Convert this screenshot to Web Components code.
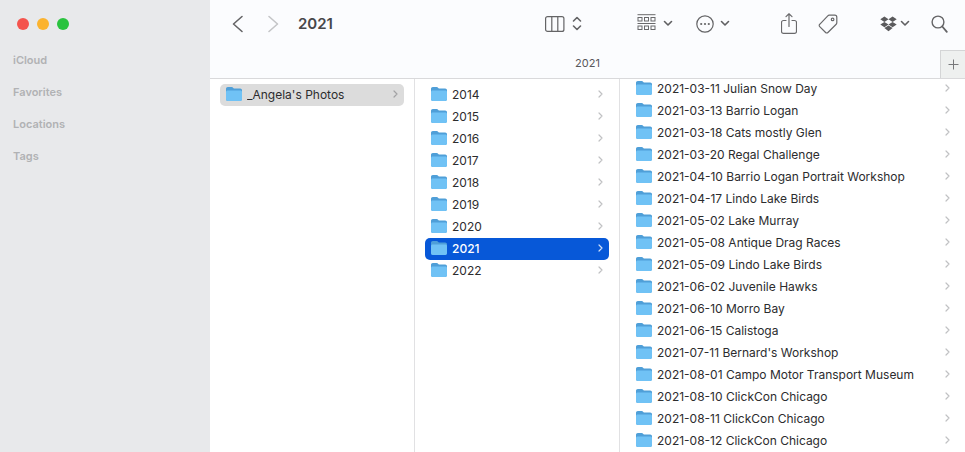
<!DOCTYPE html>
<html lang="en">
<head>
<meta charset="utf-8">
<title>2021</title>
<style>
  html, body { margin: 0; height: 100%; overflow: hidden; background: #fff; }
  body { font-family: Inter, "Liberation Sans", sans-serif; }
</style>
</head>
<body>
<finder-window>
  <finder-sidebar slot="sidebar">
    <side-label>iCloud</side-label>
    <side-label>Favorites</side-label>
    <side-label>Locations</side-label>
    <side-label>Tags</side-label>
  </finder-sidebar>
  <finder-toolbar slot="toolbar" folder="2021"></finder-toolbar>
  <finder-tabbar slot="toolbar">2021</finder-tabbar>
  <finder-column slot="columns" id="c1" style="width:205px"></finder-column>
  <finder-column slot="columns" id="c2" style="width:205px"></finder-column>
  <finder-column slot="columns" id="c3" scrolled style="flex:1"></finder-column>
</finder-window>

<script>
class FinderWindow extends HTMLElement {
  constructor() {
    super();
    this.attachShadow({ mode: "open" });
    this.shadowRoot.innerHTML = `
      <style>
        :host { display: flex; width: 965px; height: 452px; overflow: hidden; }
        .main { flex: 1; display: flex; flex-direction: column; min-width: 0; }
        .cols { flex: 1; display: flex; min-height: 0; }
      </style>
      <slot name="sidebar"></slot>
      <div class="main">
        <slot name="toolbar"></slot>
        <div class="cols"><slot name="columns"></slot></div>
      </div>`;
  }
}

class FinderSidebar extends HTMLElement {
  constructor() {
    super();
    this.attachShadow({ mode: "open" });
    this.shadowRoot.innerHTML = `
      <style>
        :host { display: block; width: 210px; flex: none; background: #e8e9eb; box-sizing: border-box; padding: 18px 0 0 17px; }
        .lights { display: flex; gap: 8px; height: 34px; }
        .lights i { width: 12px; height: 12px; border-radius: 50%; }
        .wrap { margin-left: -4px; }
      </style>
      <div class="lights">
        <i style="background:#f4544d"></i>
        <i style="background:#fbb32f"></i>
        <i style="background:#2ac33f"></i>
      </div>
      <div class="wrap"><slot></slot></div>`;
  }
}

class SideLabel extends HTMLElement {
  constructor() {
    super();
    this.attachShadow({ mode: "open" });
    this.shadowRoot.innerHTML = `
      <style>
        :host { display: block; height: 32px; line-height: 16px; font-size: 11px; font-weight: 600; color: #b1b2b4; }
      </style>
      <slot></slot>`;
  }
}

const chevronDown = `<svg width="10" height="7" viewBox="0 0 10 7" fill="none" stroke="#5f5f61" stroke-width="1.6" stroke-linecap="round" stroke-linejoin="round"><path d="M1.5 1.5 5 5l3.5-3.5"/></svg>`;

class FinderToolbar extends HTMLElement {
  constructor() {
    super();
    this.attachShadow({ mode: "open" });
    this.shadowRoot.innerHTML = `
      <style>
        :host { display: flex; align-items: center; height: 50px; box-sizing: border-box; padding: 0 0 3px 21px; background: #fbfcfe; color: #5f5f61; }
        svg { display: block; flex: none; }
        .title { font-size: 15px; font-weight: 600; color: #47474a; width: 247px; margin-left: 18px; }
      </style>
      <svg width="14" height="18" viewBox="0 0 14 18" fill="none" stroke="#646466" stroke-width="1.6" stroke-linecap="round" stroke-linejoin="round"><path d="M11 1.5 2.5 9l8.5 7.5"/></svg>
      <svg style="margin-left:21px" width="14" height="18" viewBox="0 0 14 18" fill="none" stroke="#c4c5c7" stroke-width="1.6" stroke-linecap="round" stroke-linejoin="round"><path d="M3 1.5 11.5 9 3 16.5"/></svg>
      <div class="title">${this.getAttribute("folder")}</div>

      <svg width="20" height="16" viewBox="0 0 20 16" fill="none" stroke="#646466" stroke-width="1.2"><rect x=".6" y=".6" width="18.3" height="14.8" rx="2"/><path d="M6.8.6v14.8M12.8.6v14.8"/></svg>
      <svg style="margin-left:7px" width="10" height="15" viewBox="0 0 10 15" fill="none" stroke="#646466" stroke-width="1.6" stroke-linecap="round" stroke-linejoin="round"><path d="M1.5 5 5 1.5 8.5 5M1.5 10 5 13.5 8.5 10"/></svg>

      <svg style="margin-left:55px" width="19" height="19" viewBox="0 0 19 19" fill="none" stroke="#69696b" stroke-width="1"><path d="M.5.7h18M.5 9.5h18"/><rect x="1" y="3.5" width="4" height="3.5"/><rect x="7.5" y="3.5" width="4" height="3.5"/><rect x="14" y="3.5" width="4" height="3.5"/><rect x="1" y="12" width="4" height="3.5"/><rect x="7.5" y="12" width="4" height="3.5"/><rect x="14" y="12" width="4" height="3.5"/></svg>
      <span style="margin-left:7px">${chevronDown}</span>

      <svg style="margin-left:23px" width="18" height="18" viewBox="0 0 18 18"><circle cx="9" cy="9" r="8.2" fill="none" stroke="#646466" stroke-width="1.2"/><circle cx="5.2" cy="9" r="1.1" fill="#646466"/><circle cx="9" cy="9" r="1.1" fill="#646466"/><circle cx="12.8" cy="9" r="1.1" fill="#646466"/></svg>
      <span style="margin-left:6px">${chevronDown}</span>

      <svg style="margin-left:51px" width="16" height="21" viewBox="0 0 16 21" fill="none" stroke="#69696b" stroke-width="1.2" stroke-linecap="round" stroke-linejoin="round"><path d="M5 7.500H2.500a2 2 0 0 0-2 2v8.900a2 2 0 0 0 2 2h11a2 2 0 0 0 2-2V9.500a2 2 0 0 0-2-2H11"/><path d="M8 13.500V1M5 3.600 8 .8l3 2.800"/></svg>

      <svg style="margin-left:21px" width="20" height="20" viewBox="0 0 20 20" fill="none" stroke="#69696b" stroke-width="1.2" stroke-linejoin="round"><path d="M11.200 1.200h5.600a2 2 0 0 1 2 2v5.600a2 2 0 0 1-.6 1.400l-8.300 8.300a1.600 1.600 0 0 1-2.300 0l-5.900-5.900a1.600 1.600 0 0 1 0-2.300l8.100-8.500a2 2 0 0 1 1.400-.6z"/><circle cx="14.600" cy="5.400" r="1.300"/></svg>

      <svg style="margin-left:42px" width="17" height="16" viewBox="0 0 17 16" fill="#5a5a5c"><path d="M4.400.6.300 3.300l4.100 2.600 4.100-2.600zM12.600.6 8.500 3.300l4.100 2.600 4.100-2.600zM.3 8.500l4.100 2.700 4.100-2.700-4.100-2.600zM12.600 5.900 8.500 8.500l4.100 2.700 4.100-2.700zM4.400 12l4.100 3.200 4.100-3.200-4.100-2.600z"/></svg>
      <span style="margin-left:3px">${chevronDown}</span>

      <svg style="margin-left:21px" width="17" height="18" viewBox="0 0 17 18" fill="none" stroke="#646466" stroke-width="1.4" stroke-linecap="round"><circle cx="7" cy="7" r="5.900"/><path d="M11.300 11.500 15.800 16.800" stroke-width="1.800"/></svg>`;
  }
}

class FinderTabbar extends HTMLElement {
  constructor() {
    super();
    this.attachShadow({ mode: "open" });
    this.shadowRoot.innerHTML = `
      <style>
        :host { display: flex; height: 29px; box-sizing: border-box; background: #fbfcfe; border-bottom: 1px solid #d9d9db; font-size: 11px; color: #57575a; }
        .title { flex: 1; display: flex; align-items: center; justify-content: center; padding: 0 0 2px 25px; }
        .plus { width: 25px; box-sizing: border-box; border-left: 1px solid #d4d5d6; border-top: 1px solid #d4d5d6; background: #eef0ef; display: flex; align-items: center; justify-content: center; }
        svg { display: block; }
      </style>
      <div class="title"><slot></slot></div>
      <div class="plus"><svg width="11" height="11" viewBox="0 0 11 11" stroke="#77787a" stroke-width="1"><path d="M5.500.5v10M.5 5.500h10"/></svg></div>`;
  }
}

class FinderColumn extends HTMLElement {
  constructor() {
    super();
    this.attachShadow({ mode: "open" });
    this.shadowRoot.innerHTML = `
      <style>
        :host { display: block; box-sizing: border-box; overflow: hidden; border-right: 1px solid #e1e1e3; background: #fff; }
        :host(:last-of-type) { border-right: 0; }
        .list { padding: 5px 10px 0; display: flex; flex-direction: column; }
        :host([scrolled]) .list { padding: 0 9px 0 10px; margin-top: -1px; }
      </style>
      <div class="list"><slot></slot></div>`;
  }
}

class FolderRow extends HTMLElement {
  constructor() {
    super();
    this.attachShadow({ mode: "open" });
    this.shadowRoot.innerHTML = `
      <style>
        :host { display: flex; align-items: center; height: 22px; box-sizing: border-box; padding: 0 6px 2px; border-radius: 5px; font-size: 12px; color: #2c2c2e; flex: none; }
        :host([state="open"]) { background: #dcdcdc; }
        :host([state="active"]) { background: #0758d8; color: #fff; font-weight: 500; }
        .name { flex: 1; margin-left: 5px; white-space: nowrap; overflow: hidden; }
        svg { display: block; flex: none; }
        .chev { stroke: #c0c1c3; }
        :host([state="open"]) .chev { stroke: #a2a2a4; }
        :host([state="active"]) .chev { stroke: #cfe0fa; }
      </style>
      <svg width="16" height="14" viewBox="0 0 16 14">
        <path d="M1.800 0h3.800c.8 0 1.200.3 1.700.9l.6.7h6.300c1 0 1.800.8 1.800 1.800V12c0 1.100-.8 2-1.800 2H1.800C.8 14 0 13.100 0 12V1.800C0 .8.8 0 1.800 0z" fill="#4f9fd8"/>
        <path d="M1.600 3.500h12.800c.9 0 1.600.7 1.600 1.600V12c0 1.100-.8 2-1.800 2H1.800C.8 14 0 13.100 0 12V5.100c0-.9.7-1.600 1.600-1.600z" fill="#70c2f5"/>
      </svg>
      <span class="name"><slot></slot></span>
      <svg width="5" height="8" viewBox="0 0 5 8" fill="none" class="chev" stroke-width="1.200" stroke-linecap="round" stroke-linejoin="round"><path d="M1 1l3 3-3 3"/></svg>`;
  }
}

customElements.define("finder-window", FinderWindow);
customElements.define("finder-sidebar", FinderSidebar);
customElements.define("side-label", SideLabel);
customElements.define("finder-toolbar", FinderToolbar);
customElements.define("finder-tabbar", FinderTabbar);
customElements.define("finder-column", FinderColumn);
customElements.define("folder-row", FolderRow);

function fill(id, names, states) {
  const col = document.getElementById(id);
  names.forEach((name) => {
    const row = document.createElement("folder-row");
    row.textContent = name;
    if (states[name]) row.setAttribute("state", states[name]);
    col.appendChild(row);
  });
}

fill("c1", ["_Angela's Photos"], { "_Angela's Photos": "open" });
fill("c2", ["2014", "2015", "2016", "2017", "2018", "2019", "2020", "2021", "2022"], { "2021": "active" });
fill("c3", [
  "2021-03-11 Julian Snow Day",
  "2021-03-13 Barrio Logan",
  "2021-03-18 Cats mostly Glen",
  "2021-03-20 Regal Challenge",
  "2021-04-10 Barrio Logan Portrait Workshop",
  "2021-04-17 Lindo Lake Birds",
  "2021-05-02 Lake Murray",
  "2021-05-08 Antique Drag Races",
  "2021-05-09 Lindo Lake Birds",
  "2021-06-02 Juvenile Hawks",
  "2021-06-10 Morro Bay",
  "2021-06-15 Calistoga",
  "2021-07-11 Bernard's Workshop",
  "2021-08-01 Campo Motor Transport Museum",
  "2021-08-10 ClickCon Chicago",
  "2021-08-11 ClickCon Chicago",
  "2021-08-12 ClickCon Chicago"
], {});
</script>
</body>
</html>
